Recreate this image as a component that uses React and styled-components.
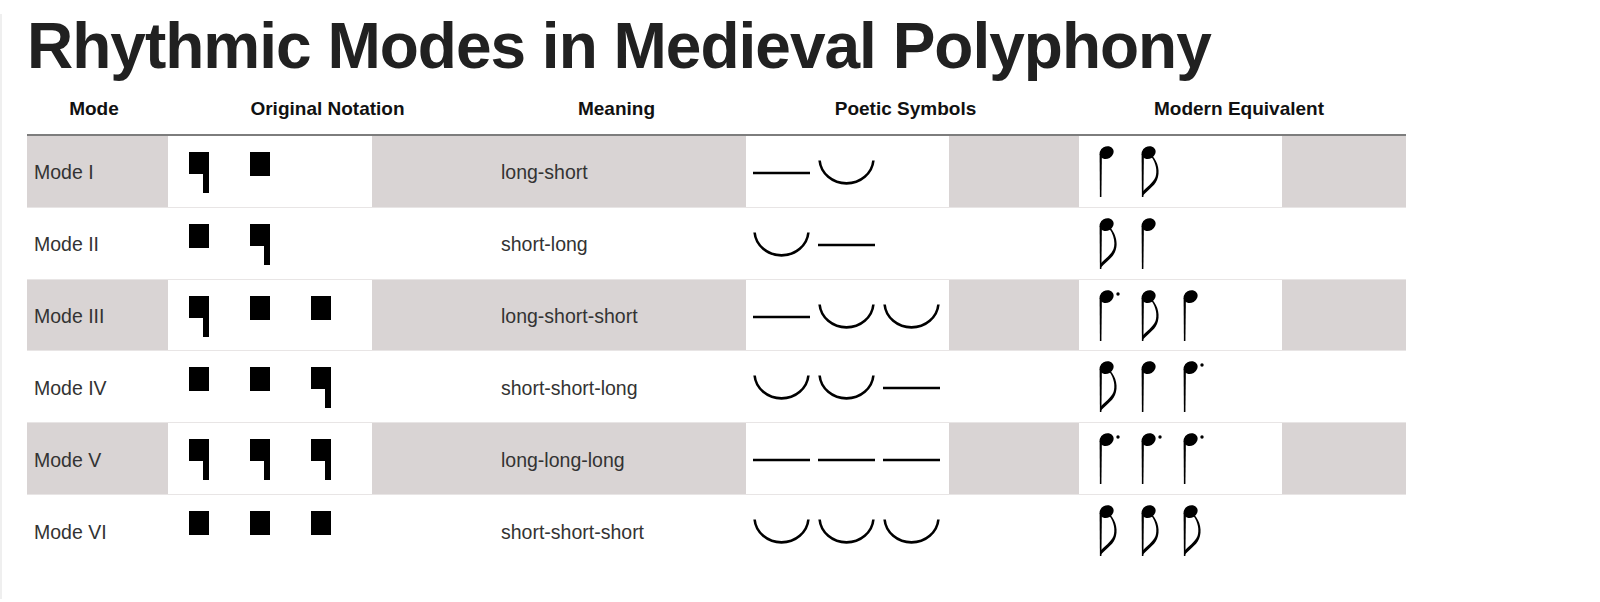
import React from 'react';
import styled, { createGlobalStyle } from 'styled-components';

const GlobalStyle = createGlobalStyle`
  html, body { margin: 0; padding: 0; background: #ffffff; }
  body { font-family: "Liberation Sans", Arial, sans-serif; }
  * { box-sizing: border-box; }
`;

const COLS = '134px 333px 245px 333px 334px';

const Page = styled.div`
  border-left: 2px solid #efefef;
  height: 585px;
  padding-left: 25px;
`;

const Title = styled.h1`
  margin: 14px 0 0 0;
  font-size: 64px;
  line-height: 1;
  font-weight: 700;
  color: #212121;
  letter-spacing: -1px;
`;

const Table = styled.div`
  width: 1379px;
`;

const HeadRow = styled.div`
  display: grid;
  grid-template-columns: ${COLS};
  border-bottom: 2px solid #7d7d7d;
  padding: 20px 0 14px;
`;

const HeadCell = styled.div`
  padding: 0 7px;
  text-align: center;
  font-size: 19px;
  line-height: 22px;
  font-weight: 700;
  color: #111;
`;

const Row = styled.div`
  display: grid;
  grid-template-columns: ${COLS};
  height: 71.8px;
  background: ${(p) => (p.$shaded ? '#d9d4d4' : '#ffffff')};
  border-bottom: 1px solid #e8e5e5;
  &:last-child {
    border-bottom: none;
  }
`;

const TextCell = styled.div`
  padding: 3px 7px 0;
  display: flex;
  align-items: center;
  font-size: 19.5px;
  color: #333;
`;

const ImageCell = styled.div`
  padding: 0 7px;
  display: flex;
  align-items: flex-start;
`;

const Picture = styled.div`
  width: ${(p) => p.$w}px;
  height: 70.8px;
  background: #ffffff;
  display: flex;
  align-items: flex-start;
  padding-left: ${(p) => p.$left}px;
  padding-top: ${(p) => p.$top}px;
  gap: ${(p) => p.$gap}px;
`;

const Long = () => (
  <svg width="20" height="41" viewBox="0 0 20 41">
    <path d="M0 0 H20 V41 H14 V22 H0 Z" fill="#000" />
  </svg>
);

const Breve = () => (
  <svg width="20" height="41" viewBox="0 0 20 41">
    <rect x="0" y="0" width="20" height="24" fill="#000" />
  </svg>
);

const Macron = () => (
  <svg width="57" height="30" viewBox="0 0 57 30">
    <line x1="0" y1="14" x2="57" y2="14" stroke="#000" strokeWidth="2.6" />
  </svg>
);

const Arc = () => (
  <svg width="57" height="30" viewBox="0 0 57 30">
    <path d="M1.6 1.5 A27 25 0 0 0 55.4 1.5" fill="none" stroke="#000" strokeWidth="2.6" />
  </svg>
);

const Note = ({ kind }) => (
  <svg width="22" height="52" viewBox="0 0 22 52">
    <ellipse cx="7.6" cy="6.6" rx="7.3" ry="6.1" transform="rotate(-30 7.6 6.6)" fill="#000" />
    <path d="M0.6 8 L2.9 8 L2.4 51 L0.9 51 Z" fill="#000" />
    {kind === 'e' && (
      <path
        d="M11.5 10 C17 16, 19.5 26, 16 34 C13 41, 6 44, 1 51 L1 46 C5 42, 12 37, 14.5 31 C16.5 25, 15 17, 10.5 11 Z"
        fill="#000"
      />
    )}
    {kind === 'qd' && <circle cx="19" cy="4" r="1.7" fill="#000" />}
  </svg>
);

const modes = [
  { name: 'Mode I', notation: ['L', 'B'], meaning: 'long-short', poetic: ['-', 'u'], modern: ['q', 'e'] },
  { name: 'Mode II', notation: ['B', 'L'], meaning: 'short-long', poetic: ['u', '-'], modern: ['e', 'q'] },
  { name: 'Mode III', notation: ['L', 'B', 'B'], meaning: 'long-short-short', poetic: ['-', 'u', 'u'], modern: ['qd', 'e', 'q'] },
  { name: 'Mode IV', notation: ['B', 'B', 'L'], meaning: 'short-short-long', poetic: ['u', 'u', '-'], modern: ['e', 'q', 'qd'] },
  { name: 'Mode V', notation: ['L', 'L', 'L'], meaning: 'long-long-long', poetic: ['-', '-', '-'], modern: ['qd', 'qd', 'qd'] },
  { name: 'Mode VI', notation: ['B', 'B', 'B'], meaning: 'short-short-short', poetic: ['u', 'u', 'u'], modern: ['e', 'e', 'e'] },
];

export default function App() {
  return (
    <>
      <GlobalStyle />
      <Page>
        <Title>Rhythmic Modes in Medieval Polyphony</Title>
        <Table>
          <HeadRow>
            <HeadCell>Mode</HeadCell>
            <HeadCell>Original Notation</HeadCell>
            <HeadCell>Meaning</HeadCell>
            <HeadCell>Poetic Symbols</HeadCell>
            <HeadCell>Modern Equivalent</HeadCell>
          </HeadRow>
          {modes.map((m, i) => (
            <Row key={m.name} $shaded={i % 2 === 0}>
              <TextCell>{m.name}</TextCell>
              <ImageCell>
                <Picture $w={204} $left={21} $top={16} $gap={41}>
                  {m.notation.map((n, j) => (n === 'L' ? <Long key={j} /> : <Breve key={j} />))}
                </Picture>
              </ImageCell>
              <TextCell>{m.meaning}</TextCell>
              <ImageCell>
                <Picture $w={203} $left={7} $top={23} $gap={8}>
                  {m.poetic.map((p, j) => (p === '-' ? <Macron key={j} /> : <Arc key={j} />))}
                </Picture>
              </ImageCell>
              <ImageCell>
                <Picture $w={203} $left={20} $top={10} $gap={20}>
                  {m.modern.map((k, j) => <Note key={j} kind={k} />)}
                </Picture>
              </ImageCell>
            </Row>
          ))}
        </Table>
      </Page>
    </>
  );
}
